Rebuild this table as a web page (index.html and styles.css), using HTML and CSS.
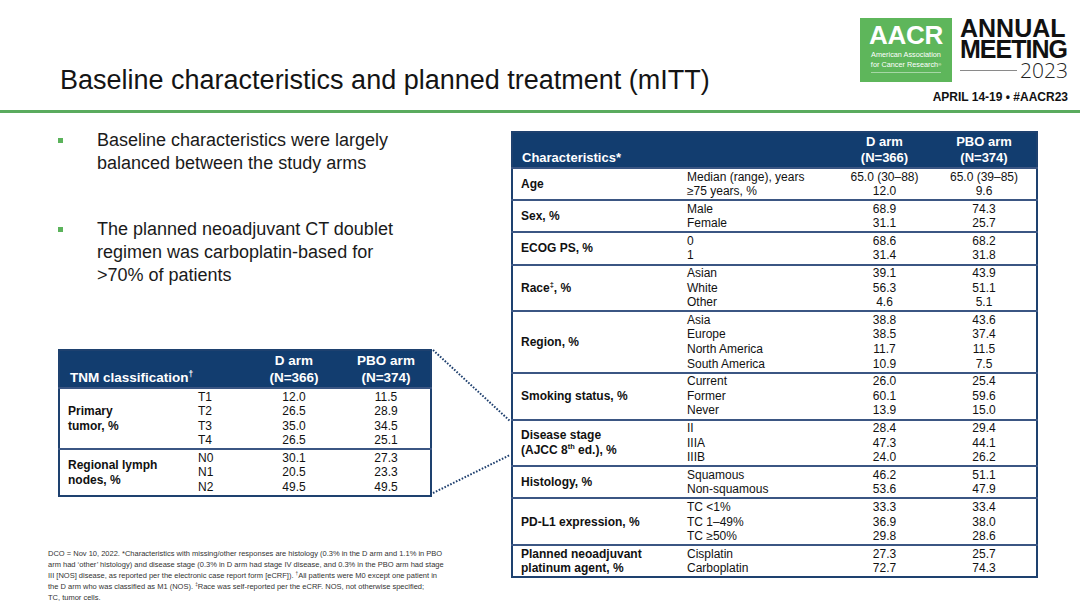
FILE: index.html
```html
<!DOCTYPE html>
<html lang="en">
<head>
<meta charset="utf-8">
<title>Baseline characteristics and planned treatment (mITT)</title>
<link rel="stylesheet" href="styles.css">
</head>
<body>
<div class="slide">
  <header class="top">
    <h1 class="title">Baseline characteristics and planned treatment (mITT)</h1>
    <div class="brand">
      <div class="brand-row">
        <div class="aacr">
          <div class="aacr-mark">AACR</div>
          <div class="aacr-name">American Association</div>
          <div class="aacr-name last">for Cancer Research<span class="reg">®</span></div>
        </div>
        <div class="meeting">
          <div class="meeting-word">ANNUAL</div>
          <div class="meeting-word tight">MEETING</div>
          <div class="meeting-year"><span class="year-line"></span><span class="year">2023</span></div>
        </div>
      </div>
      <div class="dates">APRIL 14-19 • #AACR23</div>
    </div>
  </header>
  <div class="rule"></div>
  <main class="content">
    <section class="left">
      <ul class="bullets">
        <li>Baseline characteristics were largely<br>balanced between the study arms</li>
        <li>The planned neoadjuvant CT doublet<br>regimen was carboplatin-based for<br>&gt;70% of patients</li>
      </ul>
      <table class="tnm">
        <colgroup><col class="t-lab"><col class="t-sub"><col class="t-d"><col class="t-p"></colgroup>
        <thead>
          <tr><th class="hl" colspan="2">TNM classification<sup class="sup">†</sup></th><th>D arm<br>(N=366)</th><th>PBO arm<br>(N=374)</th></tr>
        </thead>
        <tbody>
          <tr><td class="lab">Primary<br>tumor, %</td><td class="sub">T1<br>T2<br>T3<br>T4</td><td class="num">12.0<br>26.5<br>35.0<br>26.5</td><td class="num">11.5<br>28.9<br>34.5<br>25.1</td></tr>
          <tr><td class="lab">Regional lymph<br>nodes, %</td><td class="sub">N0<br>N1<br>N2</td><td class="num">30.1<br>20.5<br>49.5</td><td class="num">27.3<br>23.3<br>49.5</td></tr>
        </tbody>
      </table>
      <p class="foot">DCO = Nov 10, 2022. *Characteristics with missing/other responses are histology (0.3% in the D arm and 1.1% in PBO<br>arm had ‘other’ histology) and disease stage (0.3% in D arm had stage IV disease, and 0.3% in the PBO arm had stage<br>III [NOS] disease, as reported per the electronic case report form [eCRF]). <sup class="sup">†</sup>All patients were M0 except one patient in<br>the D arm who was classified as M1 (NOS). <sup class="sup">‡</sup>Race was self-reported per the eCRF. NOS, not otherwise specified;<br>TC, tumor cells.</p>
    </section>
    <section class="right">
      <table class="chars">
        <colgroup><col class="c-lab"><col class="c-sub"><col class="c-d"><col class="c-p"></colgroup>
        <thead>
          <tr><th class="hl" colspan="2">Characteristics*</th><th>D arm<br>(N=366)</th><th>PBO arm<br>(N=374)</th></tr>
        </thead>
        <tbody>
          <tr><td class="lab">Age</td><td class="sub">Median (range), years<br>≥75 years, %</td><td class="num">65.0 (30–88)<br>12.0</td><td class="num">65.0 (39–85)<br>9.6</td></tr>
          <tr><td class="lab">Sex, %</td><td class="sub">Male<br>Female</td><td class="num">68.9<br>31.1</td><td class="num">74.3<br>25.7</td></tr>
          <tr><td class="lab">ECOG PS, %</td><td class="sub">0<br>1</td><td class="num">68.6<br>31.4</td><td class="num">68.2<br>31.8</td></tr>
          <tr><td class="lab">Race<sup class="sup">‡</sup>, %</td><td class="sub">Asian<br>White<br>Other</td><td class="num">39.1<br>56.3<br>4.6</td><td class="num">43.9<br>51.1<br>5.1</td></tr>
          <tr><td class="lab">Region, %</td><td class="sub">Asia<br>Europe<br>North America<br>South America</td><td class="num">38.8<br>38.5<br>11.7<br>10.9</td><td class="num">43.6<br>37.4<br>11.5<br>7.5</td></tr>
          <tr><td class="lab">Smoking status, %</td><td class="sub">Current<br>Former<br>Never</td><td class="num">26.0<br>60.1<br>13.9</td><td class="num">25.4<br>59.6<br>15.0</td></tr>
          <tr><td class="lab">Disease stage<br>(AJCC 8<sup class="sup">th</sup> ed.), %</td><td class="sub">II<br>IIIA<br>IIIB</td><td class="num">28.4<br>47.3<br>24.0</td><td class="num">29.4<br>44.1<br>26.2</td></tr>
          <tr><td class="lab">Histology, %</td><td class="sub">Squamous<br>Non-squamous</td><td class="num">46.2<br>53.6</td><td class="num">51.1<br>47.9</td></tr>
          <tr><td class="lab">PD-L1 expression, %</td><td class="sub">TC &lt;1%<br>TC 1–49%<br>TC ≥50%</td><td class="num">33.3<br>36.9<br>29.8</td><td class="num">33.4<br>38.0<br>28.6</td></tr>
          <tr><td class="lab">Planned neoadjuvant<br>platinum agent, %</td><td class="sub">Cisplatin<br>Carboplatin</td><td class="num">27.3<br>72.7</td><td class="num">25.7<br>74.3</td></tr>
        </tbody>
      </table>
    </section>
  </main>
  <svg class="connector" width="1080" height="611" viewBox="0 0 1080 611" aria-hidden="true">
    <line x1="433" y1="350" x2="510" y2="421" class="dots"/>
    <line x1="433" y1="493" x2="510" y2="455" class="dots"/>
  </svg>
</div>
</body>
</html>
```

FILE: styles.css
```css
* { box-sizing: border-box; }
html, body { margin: 0; padding: 0; background: #fff; }
body { font-family: "Liberation Sans", Arial, sans-serif; color: #111; }

.slide { position: relative; width: 1080px; height: 611px; overflow: hidden; background: #fff; }

/* header */
.top { display: flex; justify-content: space-between; align-items: flex-start; height: 110px; }
.title { margin: 64px 0 0 60px; font-size: 27px; line-height: 32px; font-weight: normal; color: #141414; white-space: nowrap; }

.brand { margin: 18px 12px 0 0; display: flex; flex-direction: column; align-items: flex-end; }
.brand-row { display: flex; gap: 8px; }
.aacr { width: 92px; height: 64px; padding-top: 2px; background: #5eb65b; color: #fff; display: flex; flex-direction: column; align-items: center; }
.aacr-mark { font-family: "Liberation Sans", Arial, sans-serif; font-weight: 700; font-size: 26px; line-height: 30px; letter-spacing: -0.3px; }
.aacr-name { font-family: "Liberation Sans", Arial, sans-serif; font-size: 7.3px; line-height: 10px; height: 10px; text-align: center; white-space: nowrap; }
.aacr-name.last { height: 13px; padding-bottom: 2px; border-bottom: 1px solid rgba(255,255,255,0.45); }
.reg { font-size: 4px; vertical-align: text-top; }

.meeting { width: 108px; display: flex; flex-direction: column; }
.meeting-word { font-size: 25px; line-height: 21px; height: 21px; font-weight: bold; color: #111; white-space: nowrap; }
.meeting-word.tight { letter-spacing: -1px; }
.meeting-year { display: flex; align-items: center; height: 20px; }
.year-line { flex: 1; height: 1px; background: #8a8a8a; margin-right: 3px; }
.year { font-family: "Open Sans", sans-serif; font-weight: 300; font-size: 21px; line-height: 20px; color: #222; }
.dates { margin-top: 8px; font-size: 12px; line-height: 14px; font-weight: bold; color: #111; white-space: nowrap; }

.rule { height: 3px; background: #5aab5e; }

/* content */
.content { display: grid; grid-template-columns: 463px 525px; padding-left: 48px; }
.left { display: flex; flex-direction: column; align-items: flex-start; }

.bullets { list-style: none; margin: 16px 0 0; padding: 0 0 0 49px; font-size: 18px; line-height: 23px; color: #1a1a1a; }
.bullets li { display: flex; align-items: flex-start; }
.bullets li + li { margin-top: 43px; }
.bullets li::before { content: ""; flex: none; width: 5px; height: 5px; margin: 9px 34px 0 -39px; background: #5bb35b; }

.sup { font-size: 0.62em; vertical-align: super; line-height: 0; }

/* tables */
table { border-collapse: collapse; table-layout: fixed; font-size: 12px; color: #111; }
th { background: #123d6f; color: #fff; font-weight: bold; vertical-align: bottom; text-align: center; }
th.hl { text-align: left; }
td { vertical-align: middle; white-space: nowrap; }
td.lab { font-weight: bold; }
td.num { text-align: center; }

.tnm { width: 372px; margin: 62px 0 0 10px; border: 2px solid #1e416f; line-height: 14.6px; }
.t-lab { width: 139px; }
.t-sub { width: 48px; }
.t-d { width: 96px; }
.t-p { width: 89px; }
.tnm th { font-size: 13.5px; line-height: 17px; padding: 1px 0 1px; }
.tnm th.hl { padding-left: 10px; }
.tnm td { padding: 0.5px 0; border-top: 2px solid #3b5683; }
.tnm td.lab { padding-left: 8px; }

.foot { margin: 51px 0 0; font-size: 7.5px; line-height: 11px; color: #333; white-space: nowrap; }

.chars { width: 525px; margin-top: 18px; border: 2px solid #1e416f; line-height: 14.6px; }
.c-lab { width: 175px; }
.c-sub { width: 150px; }
.c-d { width: 95px; }
.c-p { width: 105px; }
.chars th { font-size: 13px; line-height: 15.5px; padding: 1px 0 2px; }
.chars th.hl { padding-left: 9px; }
.chars td { padding: 0.5px 0; border-top: 2px solid #3b5683; }
.chars td.lab { padding-left: 8px; }

/* connector between tables */
.connector { position: absolute; left: 0; top: 0; pointer-events: none; }
.dots { stroke: #1e3f6e; stroke-width: 2; stroke-dasharray: 1.6 1.6; }
```
